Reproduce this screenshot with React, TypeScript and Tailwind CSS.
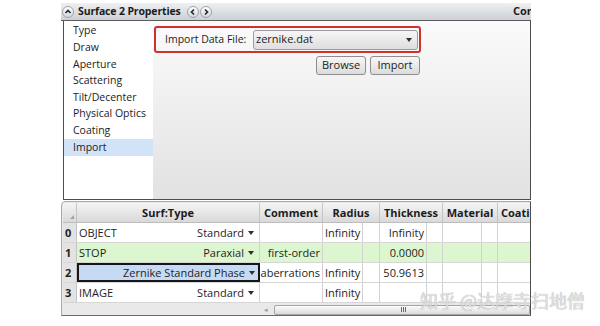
import React from "react";

const FONT = "font-['Open_Sans','Noto_Sans',sans-serif]";

function Tri() {
  return (
    <svg width="6" height="4" viewBox="0 0 6 4" className="shrink-0">
      <path d="M0 0H6L3 4Z" fill="#2f2f2f" />
    </svg>
  );
}

function CircBtn({ dir }: { dir: "up" | "left" | "right" }) {
  const d =
    dir === "up"
      ? "M2.5 6L5 3.5L7.5 6"
      : dir === "left"
      ? "M6 2.5L3.5 5L6 7.5"
      : "M4 2.5L6.5 5L4 7.5";
  return (
    <span className="inline-flex w-[12px] h-[12px] rounded-full border border-[#9ea4ab] bg-gradient-to-b from-white to-[#d3d7dc] items-center justify-center shrink-0">
      <svg width="10" height="10" viewBox="0 0 10 10">
        <path d={d} stroke="#2a2a2a" strokeWidth="1.7" fill="none" />
      </svg>
    </span>
  );
}

const listItems = [
  "Type",
  "Draw",
  "Aperture",
  "Scattering",
  "Tilt/Decenter",
  "Physical Optics",
  "Coating",
  "Import",
];

type RowData = {
  n: string;
  label: string;
  type: string;
  comment: string;
  radius: string;
  thick: string;
  green?: boolean;
  selected?: boolean;
};

const rows: RowData[] = [
  { n: "0", label: "OBJECT", type: "Standard", comment: "", radius: "Infinity", thick: "Infinity" },
  { n: "1", label: "STOP", type: "Paraxial", comment: "first-order", radius: "", thick: "0.0000", green: true },
  { n: "2", label: "", type: "Zernike Standard Phase", comment: "aberrations", radius: "Infinity", thick: "50.9613", selected: true },
  { n: "3", label: "IMAGE", type: "Standard", comment: "", radius: "Infinity", thick: "" },
];

function DataRow({ r }: { r: RowData }) {
  const bg = r.green ? "bg-[#dcf6cf]" : "bg-white";
  const cell = "h-full border-r border-[#d2d2d2] shrink-0";
  return (
    <div className={`flex h-[20px] border-b border-[#d6d6d6] ${bg} text-[11px] text-[#1e1e1e] leading-none`}>
      <div className="w-[14px] h-full bg-[#e3e3e3] border-r border-[#c4c4c4] flex items-center pl-[2px] font-bold shrink-0">
        {r.n}
      </div>
      {r.selected ? (
        <div className="w-[183px] h-full shrink-0 border-2 border-[#14161c] bg-[#c7daf3] flex items-center justify-end pr-[3px] gap-[4px]">
          <span>{r.type}</span>
          <Tri />
        </div>
      ) : (
        <div className={`${cell} w-[183px] flex items-center pl-[2px] pr-[5px]`}>
          <span className="flex-1">{r.label}</span>
          <span className="mr-[4px]">{r.type}</span>
          <Tri />
        </div>
      )}
      <div className={`${cell} w-[63px] flex items-center justify-end pr-[2px]`}>{r.comment}</div>
      <div className={`${cell} w-[40px] flex items-center pl-[2px]`}>{r.radius}</div>
      <div className={`${cell} w-[17px]`} />
      <div className={`${cell} w-[47px] flex items-center justify-end pr-[2px]`}>{r.thick}</div>
      <div className={`${cell} w-[16px]`} />
      <div className={`${cell} w-[39px]`} />
      <div className={`${cell} w-[16px]`} />
      <div className={`${cell} w-[40px]`} />
    </div>
  );
}

export default function App() {
  return (
    <div className={`relative w-[600px] h-[326px] bg-white overflow-hidden ${FONT}`}>
      <div className="ml-[61px] mt-[3px] w-[470px] flex flex-col">
        {/* Title bar */}
        <div className="h-[18px] flex items-center pl-[1px] bg-gradient-to-b from-[#eef0f2] to-[#cdd0d4] border-b border-[#5c5c5c] overflow-hidden">
          <CircBtn dir="up" />
          <span className="ml-[4px] text-[10.5px] tracking-[-0.15px] font-bold text-[#1c1c1c] whitespace-nowrap">Surface 2 Properties</span>
          <span className="ml-[6px] flex gap-[1px]">
            <CircBtn dir="left" />
            <CircBtn dir="right" />
          </span>
          <span className="ml-auto text-[11px] font-bold text-[#1c1c1c] w-[18px] overflow-hidden whitespace-nowrap">Con</span>
        </div>
        {/* Top panel */}
        <div className="ml-[2px] h-[179px] flex border-l border-r border-b border-[#4d4d4d]">
          <div className="w-[89px] bg-white pt-[2px] text-[10.5px] text-[#1c1c1c]">
            {listItems.map((it) => (
              <div
                key={it}
                className={`h-[16.6px] flex items-center pl-[9px] whitespace-nowrap ${it === "Import" ? "bg-[#d3e3f7]" : ""}`}
              >
                {it}
              </div>
            ))}
          </div>
          <div className="flex-1 bg-gradient-to-b from-[#fbfbfb] to-[#e2e2e2] pt-[5px] pl-[1px]">
            <div className="w-[267px] h-[27px] border-2 border-[#d3302c] rounded-[3px] flex items-center pl-[9px] pr-[1px]">
              <span className="text-[10.5px] text-[#1c1c1c] whitespace-nowrap">Import Data File:</span>
              <div className="ml-auto w-[165px] h-[20px] border border-[#9c9c9c] rounded-[3px] bg-gradient-to-b from-[#f6f6f6] to-[#dedede] flex items-center pl-[2px] pr-[5px]">
                <span className="text-[11px] text-[#1c1c1c] flex-1">zernike.dat</span>
                <Tri />
              </div>
            </div>
            <div className="w-[266px] flex justify-end gap-[4px] mt-[3px]">
              <div className="w-[50px] h-[19px] border border-[#8e8e8e] rounded-[3px] bg-gradient-to-b from-[#f7f7f7] to-[#dcdcdc] flex items-center justify-center text-[11px] text-[#1c1c1c]">
                Browse
              </div>
              <div className="w-[50px] h-[19px] border border-[#8e8e8e] rounded-[3px] bg-gradient-to-b from-[#f7f7f7] to-[#dcdcdc] flex items-center justify-center text-[11px] text-[#1c1c1c]">
                Import
              </div>
            </div>
          </div>
        </div>
        {/* Grid */}
        <div className="mt-[1px] h-[115px] border border-[#a8a8a8] border-r-[#4d4d4d] border-b-[#6a6a6a] rounded-tl-[5px] bg-[#e9e9e9] pt-[1px] pl-[1px] overflow-hidden">
          <div className="flex h-[20px] bg-gradient-to-b from-[#f4f4f4] to-[#d9d9d9] border-b border-[#bdbdbd] text-[11px] font-bold text-[#1c1c1c] leading-none whitespace-nowrap">
            <div className="w-[14px] h-full border-r border-[#c4c4c4] shrink-0 relative">
              <svg width="4" height="4" viewBox="0 0 4 4" className="absolute right-[2px] bottom-[3px]">
                <path d="M4 0V4H0Z" fill="#a0a0a0" />
              </svg>
            </div>
            <div className="w-[183px] h-full border-r border-[#c4c4c4] flex items-center justify-center shrink-0">Surf:Type</div>
            <div className="w-[63px] h-full border-r border-[#c4c4c4] flex items-center justify-center shrink-0">Comment</div>
            <div className="w-[57px] h-full border-r border-[#c4c4c4] flex items-center justify-center shrink-0">Radius</div>
            <div className="w-[63px] h-full border-r border-[#c4c4c4] flex items-center justify-center shrink-0">Thickness</div>
            <div className="w-[55px] h-full border-r border-[#c4c4c4] flex items-center justify-center shrink-0">Material</div>
            <div className="w-[60px] h-full flex items-center pl-[3px] shrink-0">Coating</div>
          </div>
          {rows.map((r) => (
            <DataRow key={r.n} r={r} />
          ))}
          {/* scrollbar */}
          <div className="flex h-[13px] items-center">
            <div className="w-[201px] shrink-0" />
            <div className="w-[10px] text-[7px] text-[#9a9a9a] leading-none flex items-center">◂</div>
            <div className="flex-1 h-[10px] border border-[#a5a5a5] rounded-[2px] bg-gradient-to-b from-[#fbfbfb] to-[#dcdcdc] flex items-center pl-[126px]">
              <svg width="6" height="5" viewBox="0 0 6 5">
                <path d="M0.5 0V5M2.5 0V5M4.5 0V5" stroke="#6a6a6a" strokeWidth="1" />
              </svg>
            </div>
          </div>
        </div>
      </div>
      {/* watermark */}
      <div className="absolute left-[420px] top-[291px] text-[18px] leading-none text-[#e0e0e0] whitespace-nowrap font-['Noto_Sans_CJK_SC',sans-serif] [text-shadow:0_0_1px_#a6a6a6]">
        知乎 @达摩寺扫地僧
      </div>
    </div>
  );
}
